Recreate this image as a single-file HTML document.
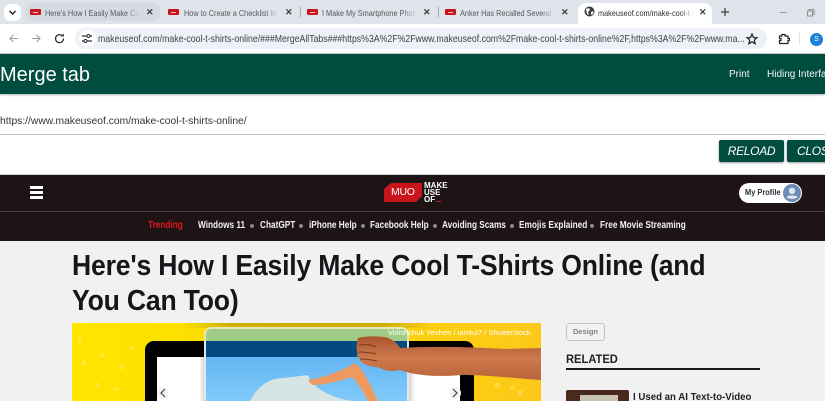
<!DOCTYPE html>
<html>
<head>
<meta charset="utf-8">
<style>
html,body{margin:0;padding:0;}
body{width:825px;height:401px;overflow:hidden;position:relative;background:#fff;font-family:"Liberation Sans",sans-serif;}
.a{position:absolute;white-space:nowrap;}
.tabt{font-size:8.500px;color:#55585d;top:6.500px;overflow:hidden;height:12px;line-height:12px;transform:scaleX(.86);transform-origin:0 0;-webkit-mask-image:linear-gradient(to right,#000 85%,transparent);mask-image:linear-gradient(to right,#000 85%,transparent);}
.x{font-size:9px;color:#3c4043;top:6px;line-height:12px;font-weight:bold;}
.fav{position:absolute;top:9px;width:11px;height:6px;background:#c8161c;border-radius:1px;}
.fav::after{content:"";position:absolute;left:3px;top:2.500px;width:5px;height:1px;background:#f3c9c9;}
.tr{position:absolute;top:219px;font-size:10px;line-height:14px;color:#f2f2f2;font-weight:bold;white-space:nowrap;transform:scaleX(.825);transform-origin:0 0;}
.dot{position:absolute;top:224px;width:4px;height:4px;border-radius:2px;background:#8a8a8a;}
</style>
</head>
<body>
<!-- tab strip -->
<div class="a" style="left:0;top:0;width:825px;height:24px;background:#dfe3ea;"></div>
<div class="a" style="left:4px;top:4px;width:17px;height:17px;background:#fff;border-radius:6px;"></div>
<svg class="a" style="left:8px;top:8px" width="9" height="9" viewBox="0 0 9 9"><path d="M1.500 3 L4.500 6 L7.500 3" fill="none" stroke="#222" stroke-width="1.400"/></svg>
<div class="a" style="left:25px;top:3px;width:135px;height:18px;background:#d0d5de;border-radius:8px;opacity:.6;"></div>
<div class="fav" style="left:30px"></div>
<div class="a tabt" style="left:45px;width:110px;">Here's How I Easily Make Cool T-Shirts</div>
<div class="a x" style="left:146px">✕</div>
<div class="fav" style="left:168px"></div>
<div class="a tabt" style="left:184px;width:110px;">How to Create a Checklist in Word</div>
<div class="a x" style="left:285px">✕</div>
<div class="a" style="left:300px;top:7px;width:1px;height:10px;background:#a9adb3;"></div>
<div class="fav" style="left:307px"></div>
<div class="a tabt" style="left:322px;width:110px;">I Make My Smartphone Photos Look</div>
<div class="a x" style="left:423px">✕</div>
<div class="a" style="left:438px;top:7px;width:1px;height:10px;background:#a9adb3;"></div>
<div class="fav" style="left:445px"></div>
<div class="a tabt" style="left:460px;width:110px;">Anker Has Recalled Several Power Banks</div>
<div class="a x" style="left:561px">✕</div>
<div class="a" style="left:578px;top:3px;width:134px;height:21px;background:#fff;border-radius:8px 8px 0 0;"></div>
<svg class="a" style="left:584px;top:6px" width="11" height="11" viewBox="0 0 11 11"><circle cx="5.500" cy="5.500" r="5" fill="#3c4043"/><path d="M2 3 L5 2 L6 4 L4 6 L5 9 L3 8Z M7 6 L9.500 5 L9 8 L7 9Z" fill="#fff"/></svg>
<div class="a tabt" style="left:598px;width:112px;color:#2e3033;">makeuseof.com/make-cool-t-shirts</div>
<div class="a x" style="left:699px">✕</div>
<svg class="a" style="left:720px;top:7px" width="10" height="10" viewBox="0 0 10 10"><path d="M5 1V9M1 5H9" stroke="#3c4043" stroke-width="1.200"/></svg>
<div class="a" style="left:780px;top:12px;width:7px;height:1px;background:#9a9da2;"></div>
<svg class="a" style="left:806px;top:8px" width="9" height="9" viewBox="0 0 9 9"><path d="M1.500 3H6.500V8H1.500Z M3 3V1.500H8V6.500H6.500" fill="none" stroke="#8d9095" stroke-width="1"/></svg>

<!-- toolbar -->
<div class="a" style="left:0;top:24px;width:825px;height:29px;background:#fff;"></div>
<svg class="a" style="left:8px;top:33px" width="11" height="11" viewBox="0 0 11 11"><path d="M10 5.500H2M5.500 2L2 5.500L5.500 9" fill="none" stroke="#9a9da2" stroke-width="1.100"/></svg>
<svg class="a" style="left:31px;top:33px" width="11" height="11" viewBox="0 0 11 11"><path d="M1 5.500H9M5.500 2L9 5.500L5.500 9" fill="none" stroke="#9a9da2" stroke-width="1.100"/></svg>
<svg class="a" style="left:54px;top:33px" width="11" height="11" viewBox="0 0 11 11"><path d="M9.500 5.500A4 4 0 1 1 8 2.500" fill="none" stroke="#303134" stroke-width="1.300"/><path d="M6.500 3.500H9.800V0.500Z" fill="#303134"/></svg>
<div class="a" style="left:75px;top:28px;width:692px;height:21px;background:#eef1f8;border-radius:11px;"></div>
<div class="a" style="left:79px;top:30px;width:17px;height:17px;background:#fff;border-radius:9px;"></div>
<svg class="a" style="left:81px;top:33px" width="12" height="11" viewBox="0 0 12 11"><path d="M1 3H6M9 3H11M1 8H3M6 8H11" stroke="#303134" stroke-width="1.200"/><circle cx="7.500" cy="3" r="1.500" fill="none" stroke="#303134"/><circle cx="4.500" cy="8" r="1.500" fill="none" stroke="#303134"/></svg>
<div class="a" style="left:98px;top:32px;font-size:10.500px;line-height:14px;color:#3f4246;transform:scaleX(.832);transform-origin:0 0;">makeuseof.com/make-cool-t-shirts-online/###MergeAllTabs###https%3A%2F%2Fwww.makeuseof.com%2Fmake-cool-t-shirts-online%2F,https%3A%2F%2Fwww.ma...</div>
<svg class="a" style="left:746px;top:33px" width="12" height="12" viewBox="0 0 12 12"><path d="M6 1L7.500 4.500L11 4.800L8.300 7.100L9.200 10.700L6 8.800L2.800 10.700L3.700 7.100L1 4.800L4.500 4.500Z" fill="none" stroke="#222" stroke-width="1.200"/></svg>
<svg class="a" style="left:778px;top:33px" width="12" height="12" viewBox="0 0 12 12"><path d="M1.500 3H4V1.500H7V3H10V5.500H11.500V7.500H10V10.500H1.500V7.500H3V5.500H1.500Z" fill="none" stroke="#222" stroke-width="1.200"/></svg>
<div class="a" style="left:799px;top:33px;width:1px;height:11px;background:#d6e2f5;"></div>
<div class="a" style="left:810px;top:33px;width:13px;height:13px;border-radius:50%;background:#1a81d4;color:#fff;font-size:7px;line-height:13px;text-align:center;">S</div>
<div class="a" style="left:0;top:53px;width:825px;height:1px;background:#c8cbce;"></div>

<!-- green bar -->
<div class="a" style="left:0;top:54px;width:825px;height:40px;background:#004d40;box-shadow:0 1px 2px rgba(0,0,0,.3);"></div>
<div class="a" style="left:0;top:61px;font-size:20px;line-height:28px;color:#fff;">Merge tab</div>
<div class="a" style="left:729px;top:67.500px;font-size:10px;line-height:14px;color:#f1f5f3;">Print</div>
<div class="a" style="left:767px;top:67.500px;font-size:10px;line-height:14px;color:#f1f5f3;">Hiding Interface</div>

<!-- url and line -->
<div class="a" style="left:0;top:114.500px;font-size:10.300px;line-height:14px;color:#333;">https://www.makeuseof.com/make-cool-t-shirts-online/</div>
<div class="a" style="left:0;top:134px;width:825px;height:1px;background:#bdbdbd;"></div>
<div class="a" style="left:719px;top:140px;width:65px;height:22px;background:#004d40;border-radius:2px;box-shadow:0 1px 2px rgba(0,0,0,.4);color:#fff;font-style:italic;font-size:12px;letter-spacing:-.3px;line-height:23px;text-align:center;">RELOAD</div>
<div class="a" style="left:787px;top:140px;width:60px;height:22px;background:#004d40;border-radius:2px;box-shadow:0 1px 2px rgba(0,0,0,.4);color:#fff;font-style:italic;font-size:12px;letter-spacing:-.3px;line-height:23px;padding-left:10px;">CLOSE</div>

<!-- site header -->
<div class="a" style="left:0;top:174px;width:825px;height:1px;background:#d8d8d8;"></div>
<div class="a" style="left:0;top:175px;width:825px;height:66px;background:#1e1415;"></div>
<div class="a" style="left:0;top:211px;width:825px;height:1px;background:#4a4244;"></div>
<div class="a" style="left:30px;top:186px;width:13px;height:2.500px;background:#fff;"></div>
<div class="a" style="left:30px;top:191px;width:13px;height:2.500px;background:#fff;"></div>
<div class="a" style="left:30px;top:196px;width:13px;height:2.500px;background:#fff;"></div>
<!-- logo -->
<svg class="a" style="left:384px;top:183px" width="40" height="20" viewBox="0 0 40 20"><path d="M7 0H38V19H0V6Z" fill="#c8141b"/><path d="M32 19L38 13V19Z" fill="#1e1415"/></svg>
<div class="a" style="left:391px;top:186px;font-size:10.500px;line-height:13px;color:#fff;letter-spacing:-0.300px;">MUO</div>
<div class="a" style="left:424px;top:183px;font-size:8px;line-height:6.800px;font-weight:bold;color:#fff;white-space:pre;">MAKE
USE
OF</div>
<div class="a" style="left:436px;top:201px;width:5px;height:1px;background:#d2161c;"></div>
<!-- profile -->
<div class="a" style="left:739px;top:183px;width:63px;height:20px;background:#fff;border-radius:10px;"></div>
<div class="a" style="left:745px;top:186px;font-size:8px;line-height:14px;font-weight:bold;color:#2b2b33;transform:scaleX(.93);transform-origin:0 0;">My Profile</div>
<svg class="a" style="left:783px;top:184px" width="18" height="18" viewBox="0 0 18 18"><circle cx="9" cy="9" r="9" fill="#6b8cb5"/><circle cx="9" cy="6.800" r="3.200" fill="#dfe6f0"/><path d="M3.500 13C5 10.800 13 10.800 14.500 13C13 15.500 5 15.500 3.500 13Z" fill="#dfe6f0"/></svg>
<!-- trending -->
<div class="tr" style="left:148px;color:#e0161c;">Trending</div>
<div class="tr" style="left:198px;">Windows 11</div>
<div class="dot" style="left:250px"></div>
<div class="tr" style="left:260px;">ChatGPT</div>
<div class="dot" style="left:299px"></div>
<div class="tr" style="left:309px;">iPhone Help</div>
<div class="dot" style="left:361px"></div>
<div class="tr" style="left:370px;">Facebook Help</div>
<div class="dot" style="left:433px"></div>
<div class="tr" style="left:442px;">Avoiding Scams</div>
<div class="dot" style="left:510px"></div>
<div class="tr" style="left:519px;">Emojis Explained</div>
<div class="dot" style="left:590px"></div>
<div class="tr" style="left:600px;">Free Movie Streaming</div>

<!-- content -->
<div class="a" style="left:0;top:241px;width:825px;height:160px;background:#f1f1f1;"></div>
<div class="a" style="left:72px;top:249px;font-size:29px;line-height:35px;font-weight:bold;color:#15151a;white-space:pre;letter-spacing:-0.200px;transform:scaleX(.916);transform-origin:0 0;">Here's How I Easily Make Cool T-Shirts Online (and
You Can Too)</div>

<!-- hero image -->
<svg class="a" style="left:72px;top:323px" width="469" height="78" viewBox="0 0 469 78">
<defs>
<linearGradient id="y" x1="0" y1="0" x2="1" y2="0"><stop offset="0" stop-color="#ffe600"/><stop offset=".5" stop-color="#f8d800"/><stop offset="1" stop-color="#fdc81a"/></linearGradient>
<linearGradient id="b" x1="0" y1="0" x2="0" y2="1"><stop offset="0" stop-color="#63b5f2"/><stop offset="1" stop-color="#85cdfd"/></linearGradient>
<linearGradient id="wr" x1="0" y1="0" x2="1" y2="0"><stop offset="0" stop-color="#c8c8c8"/><stop offset=".5" stop-color="#fff"/></linearGradient>
<linearGradient id="wl" x1="0" y1="0" x2="1" y2="0"><stop offset=".5" stop-color="#fff"/><stop offset="1" stop-color="#c8c8c8"/></linearGradient>
<linearGradient id="arm" x1="0" y1="0" x2="0" y2="1"><stop offset="0" stop-color="#a9532e"/><stop offset=".5" stop-color="#cf7a4c"/><stop offset="1" stop-color="#b9633a"/></linearGradient>
<linearGradient id="sh" x1="0" y1="0" x2="1" y2="0"><stop offset="0" stop-color="#b89c00" stop-opacity="0"/><stop offset=".2" stop-color="#b89c00" stop-opacity=".7"/><stop offset=".8" stop-color="#b89c00" stop-opacity=".7"/><stop offset="1" stop-color="#b89c00" stop-opacity="0"/></linearGradient>
</defs>
<rect width="469" height="78" fill="url(#y)"/>
<g fill="#ffef70" opacity=".55"><circle cx="12" cy="40" r="2.500"/><circle cx="30" cy="32" r="2"/><circle cx="50" cy="44" r="2.500"/><circle cx="25" cy="62" r="2.500"/><circle cx="45" cy="66" r="2"/><circle cx="60" cy="25" r="2"/><circle cx="8" cy="18" r="2"/><circle cx="425" cy="62" r="2.500"/><circle cx="448" cy="70" r="2.500"/><circle cx="440" cy="65" r="2"/></g>
<rect x="110" y="0" width="250" height="5" fill="url(#sh)"/>
<rect x="73" y="18" width="329" height="70" rx="9" fill="#000"/>
<rect x="85" y="34" width="303" height="50" fill="#fff"/>
<rect x="336" y="34" width="14" height="50" fill="url(#wr)"/>
<rect x="120" y="34" width="14" height="50" fill="url(#wl)"/>
<rect x="133" y="5" width="203" height="80" rx="6" fill="#a0cc88" stroke="#eae8b0" stroke-width="2"/>
<rect x="132" y="18" width="2" height="60" fill="#dfe8ea"/>
<rect x="335" y="18" width="2" height="60" fill="#dfe8ea"/>
<rect x="134" y="18" width="201" height="16" fill="#024a80"/>
<rect x="134" y="34" width="201" height="50" fill="url(#b)"/>
<path d="M178 78C185 65 195 55 212 55L236 52C240 65 260 75 280 78Z" fill="#d6e4e4"/>
<path d="M236 57C250 55 270 48 283 40C290 45 298 60 306 78H296C290 66 284 58 280 54C268 58 252 62 240 62Z" fill="#ee9a5e"/>
<path d="M283 38L288 27" stroke="#8aa4b4" stroke-width=".7"/>
<path d="M286 15C292 13 304 13 312 14C320 15 326 21 328 25C360 23 400 24 432 26L469 25V57C440 55 415 52 390 52C365 54 345 53 328 47C320 49 312 48 306 44C296 44 288 40 287 35C284 30 284 20 286 15Z" fill="url(#arm)"/>
<path d="M287 22C294 21 300 22 304 24M286 29C293 29 300 30 304 31M288 36C294 36 300 37 305 38" fill="none" stroke="#7a3a20" stroke-width="1"/>
<circle cx="91" cy="70" r="6" fill="#f4f4f4"/><path d="M93 66L89 70L93 74" fill="none" stroke="#444" stroke-width="1.200"/>
<circle cx="383" cy="70" r="6" fill="#f4f4f4"/><path d="M381 66L385 70L381 74" fill="none" stroke="#444" stroke-width="1.200"/>
</svg>
<div class="a" style="left:388px;top:327px;font-size:7.600px;line-height:11px;color:#fff;">Volishchuk Yevhen / iamtui7 / Shutterstock</div>

<!-- sidebar -->
<div class="a" style="left:566px;top:323px;width:37px;height:16px;border:1px solid #c4c4c4;border-radius:3px;color:#808080;font-size:7.500px;font-weight:bold;line-height:16px;text-align:center;">Design</div>
<div class="a" style="left:566px;top:352px;font-size:12px;line-height:15px;font-weight:bold;color:#222;transform:scaleX(.93);transform-origin:0 0;">RELATED</div>
<div class="a" style="left:566px;top:368px;width:194px;height:2px;background:#1a1a1a;"></div>
<div class="a" style="left:566px;top:390px;width:63px;height:11px;background:#4a2a1c;border-radius:2px 2px 0 0;"></div>
<div class="a" style="left:580px;top:395px;width:38px;height:6px;background:#c9c4b4;"></div>
<div class="a" style="left:633px;top:390px;font-size:10.500px;line-height:14px;font-weight:bold;color:#222;transform:scaleX(.92);transform-origin:0 0;">I Used an AI Text-to-Video</div>
</body>
</html>
